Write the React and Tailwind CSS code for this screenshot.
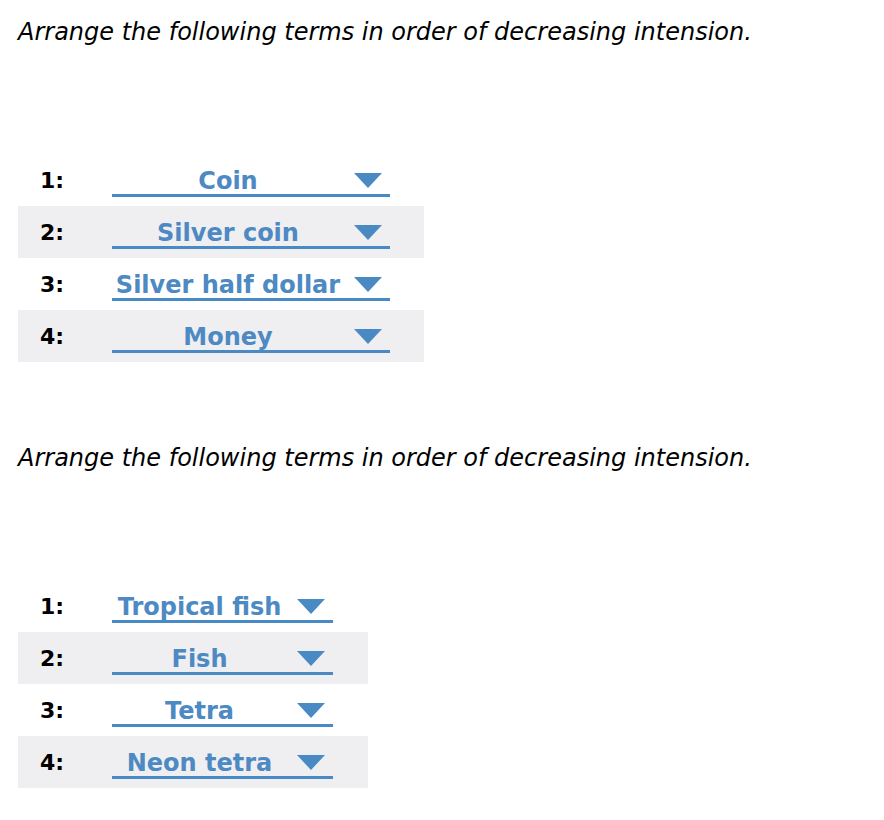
const font = { fontFamily: '"DejaVu Sans", Verdana, sans-serif' };

const Triangle = () => (
  <svg width="28" height="15" viewBox="0 0 28 15" className="shrink-0 mt-[6px]">
    <polygon points="0,0 28,0 14,15" fill="#4a8ac4" />
  </svg>
);

const Row = ({ n, term, shaded, width, rowWidth }) => (
  <div
    className={`flex items-center h-[52px] pl-[22px] ${shaded ? 'bg-[#efeff1]' : ''}`}
    style={{ width: rowWidth }}
  >
    <span className="w-[72px] text-[22px] font-bold text-black">{n}:</span>
    <div
      className="flex items-center gap-[10px] h-[37px] mb-[3px] border-b-[3px] border-[#4a8ac4] pr-[8px]"
      style={{ width }}
    >
      <span className="flex-1 pt-[7px] text-center text-[24px] font-bold text-[#4d89c2] whitespace-nowrap">{term}</span>
      <Triangle />
    </div>
  </div>
);

const Block = ({ terms, width, rowWidth }) => (
  <div className="flex flex-col">
    {terms.map((t, i) => (
      <Row key={t} n={i + 1} term={t} shaded={i % 2 === 1} width={width} rowWidth={rowWidth} />
    ))}
  </div>
);

export default function App() {
  return (
    <div className="bg-white w-[884px] h-[820px] pl-[18px] pt-[14px]" style={font}>
      <p className="text-[24px] italic text-black leading-[36px]">
        Arrange the following terms in order of decreasing intension.
      </p>
      <div className="mt-[104px]">
        <Block terms={['Coin', 'Silver coin', 'Silver half dollar', 'Money']} width={278} rowWidth={406} />
      </div>
      <p className="mt-[78px] text-[24px] italic text-black leading-[36px]">
        Arrange the following terms in order of decreasing intension.
      </p>
      <div className="mt-[104px]">
        <Block terms={['Tropical fish', 'Fish', 'Tetra', 'Neon tetra']} width={221} rowWidth={350} />
      </div>
    </div>
  );
}
